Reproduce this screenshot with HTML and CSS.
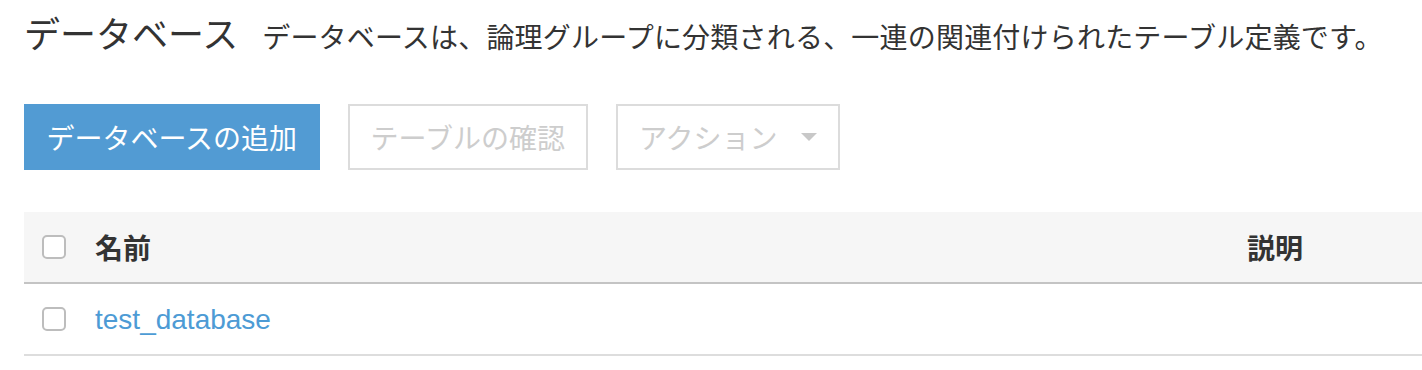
FILE: index.html
```html
<!DOCTYPE html>
<html lang="ja">
<head>
<meta charset="utf-8">
<link rel="stylesheet" href="styles.css">
</head>
<body>
<div class="page">
  <header class="heading">
    <h1 class="title">データベース</h1>
    <p class="subtitle">データベースは、論理グループに分類される、一連の関連付けられたテーブル定義です。</p>
  </header>
  <div class="toolbar">
    <button class="btn btn-primary">データベースの追加</button>
    <button class="btn btn-disabled">テーブルの確認</button>
    <button class="btn btn-disabled btn-dropdown">アクション<span class="caret"></span></button>
  </div>
  <div class="table">
    <div class="row head">
      <div class="cell cb"><span class="checkbox"></span></div>
      <div class="cell">名前</div>
      <div class="cell">説明</div>
    </div>
    <div class="row">
      <div class="cell cb"><span class="checkbox"></span></div>
      <div class="cell name"><a class="link" href="#">test_database</a></div>
      <div class="cell"></div>
    </div>
  </div>
</div>
</body>
</html>
```

FILE: styles.css
```css
* { box-sizing: border-box; }
html, body { margin: 0; padding: 0; background: #fff; }
body {
  font-family: "Noto Sans CJK JP", "Liberation Sans", sans-serif;
  color: #333;
  width: 1422px;
  overflow: hidden;
}
.page { padding: 0 0 0 24px; }
.heading {
  display: flex;
  align-items: baseline;
  gap: 24px;
  height: 70px;
  padding-top: 6px;
}
.title {
  margin: 0;
  font-size: 36px;
  font-weight: 400;
  line-height: 52px;
  color: #333;
}
.subtitle {
  margin: 0;
  font-size: 28px;
  line-height: 40px;
  letter-spacing: 0.2px;
  color: #333;
  white-space: nowrap;
}
.toolbar {
  display: flex;
  gap: 28px;
  margin-top: 34px;
  height: 66px;
}
.btn {
  font-family: inherit;
  font-size: 28px;
  height: 66px;
  padding: 0 21px;
  border: 2px solid #dcdcdc;
  background: #fff;
  color: #cdcdcd;
  line-height: 1;
  display: flex;
  align-items: center;
  margin: 0;
}
.btn-primary {
  padding: 0 20.5px;
  background: #529bd3;
  border-color: #529bd3;
  color: #fff;
}
.btn-dropdown { gap: 23px; }
.caret {
  width: 0;
  height: 0;
  border-left: 8px solid transparent;
  border-right: 8px solid transparent;
  border-top: 8px solid #c8c8c8;
}
.table { margin-top: 42px; }
.row {
  display: grid;
  grid-template-columns: 71px 1fr 175px;
  align-items: center;
  height: 72px;
  border-bottom: 2px solid #dddddd;
}
.row.head {
  height: 72px;
  background: #f6f6f6;
  border-bottom-color: #c4c4c4;
  font-weight: 700;
}
.cell { font-size: 28px; }
.name { padding-bottom: 5px; }
.cb { padding-left: 18px; display: flex; align-items: center; }
.checkbox {
  display: block;
  width: 24px;
  height: 24px;
  border: 2px solid #bdbdbd;
  border-radius: 5px;
  background: #fff;
}
.link {
  font-family: "Liberation Sans", Arial, sans-serif;
  color: #4d9bd5;
  text-decoration: none;
}
```
